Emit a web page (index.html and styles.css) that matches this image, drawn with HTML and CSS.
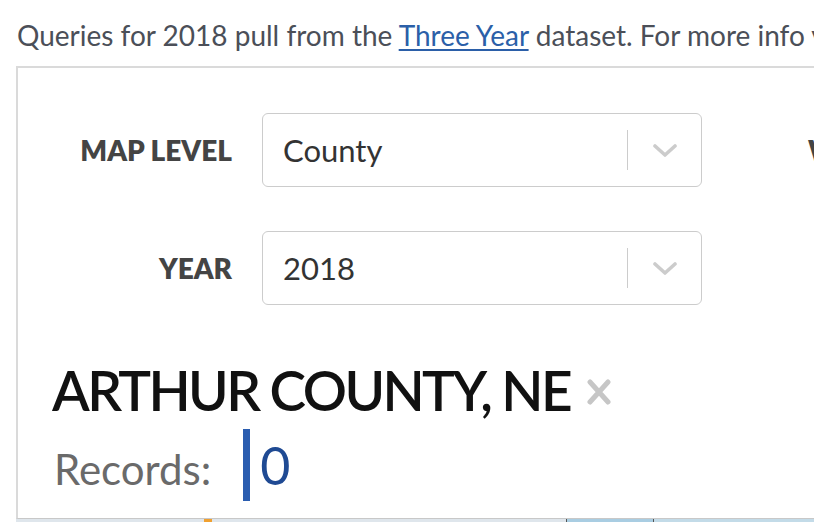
FILE: index.html
```html
<!DOCTYPE html>
<html lang="en">
<head>
<meta charset="utf-8">
<title>Query panel</title>
<link rel="stylesheet" href="styles.css">
</head>
<body>
<p class="intro">Queries for 2018 pull from the <a class="link" href="#">Three Year</a> dataset. For more info visit the documentation page.</p>
<div class="panel">
  <div class="form">
    <div class="row">
      <label class="label">MAP LEVEL</label>
      <div class="select">
        <span class="value">County</span>
        <span class="sep"></span>
        <span class="arrow"><svg width="24" height="14" viewBox="0 0 24 14"><path d="M2 2 L12 11 L22 2" fill="none" stroke="#cccccc" stroke-width="3.6" stroke-linecap="round" stroke-linejoin="round"/></svg></span>
      </div>
      <label class="label label-next">WEIGHTING</label>
    </div>
    <div class="row">
      <label class="label">YEAR</label>
      <div class="select">
        <span class="value">2018</span>
        <span class="sep"></span>
        <span class="arrow"><svg width="24" height="14" viewBox="0 0 24 14"><path d="M2 2 L12 11 L22 2" fill="none" stroke="#cccccc" stroke-width="3.6" stroke-linecap="round" stroke-linejoin="round"/></svg></span>
      </div>
    </div>
  </div>
  <div class="result">
    <div class="title-row">
      <h1 class="title">ARTHUR COUNTY, NE</h1>
      <span class="close"><svg width="24" height="26" viewBox="0 0 24 26"><path d="M3 3 L21 23 M21 3 L3 23" stroke="#c6c6c6" stroke-width="5" stroke-linecap="round"/></svg></span>
    </div>
    <div class="records">
      <span class="records-label">Records:</span>
      <span class="records-value">0</span>
    </div>
  </div>
</div>
<div class="map-strip"></div>
</body>
</html>
```
FILE: styles.css
```css
html, body {
  margin: 0;
  padding: 0;
  background: #ffffff;
  overflow: hidden;
}
body {
  width: 814px;
  height: 522px;
  font-family: Lato, "Open Sans", sans-serif;
}
.intro {
  margin: 0;
  padding: 20px 0 0 17px;
  font-size: 28px;
  line-height: 30px;
  color: #4b4f58;
  white-space: nowrap;
}
.link {
  color: #2b5fa8;
  text-decoration: underline;
  text-decoration-thickness: 2px;
  text-underline-offset: 3px;
}
.panel {
  margin: 16px 0 0 16px;
  border-left: 2px solid #dadada;
  border-top: 2px solid #dadada;
  border-bottom: 1px solid #c8c8c8;
  height: 450px;
  box-sizing: content-box;
  overflow: hidden;
  white-space: nowrap;
}
.form {
  padding-top: 45px;
  display: flex;
  flex-direction: column;
  gap: 44px;
}
.row {
  display: flex;
  align-items: center;
}
.label {
  width: 214px;
  text-align: right;
  font-weight: 800;
  font-size: 28px;
  color: #444444;
  flex: none;
}
.label-next {
  width: auto;
  text-align: left;
  margin-left: 106px;
}
.select {
  margin-left: 30px;
  width: 440px;
  height: 74px;
  box-sizing: border-box;
  border: 1px solid #cccccc;
  border-radius: 6px;
  display: flex;
  align-items: center;
  flex: none;
}
.value {
  flex: 1;
  padding-left: 20px;
  font-size: 31px;
  color: #333333;
}
.sep {
  width: 1px;
  height: 40px;
  background: #cccccc;
}
.arrow {
  width: 73px;
  display: flex;
  justify-content: center;
  align-items: center;
  padding-top: 2px;
}
.result {
  padding-left: 34px;
  margin-top: 50px;
}
.title-row {
  display: flex;
  align-items: center;
  gap: 17px;
}
.title {
  margin: 0;
  font-size: 55px;
  line-height: 70px;
  font-weight: 600;
  color: #111111;
  letter-spacing: -2.6px;
}
.close {
  display: flex;
  padding-top: 4px;
}
.records {
  margin-top: 4px;
  display: flex;
  align-items: baseline;
}
.records-label {
  font-size: 42px;
  color: #6a6a6a;
  margin-left: 2px;
}
.records-value {
  margin-left: 32px;
  border-left: 7px solid #2a5db0;
  padding-left: 10px;
  font-size: 52px;
  line-height: 72px;
  color: #1f4a93;
}
.map-strip {
  margin-left: 16px;
  height: 10px;
  background:
    linear-gradient(90deg, transparent 188px, #f0a030 188px, #f0a030 196px, transparent 196px),
    linear-gradient(90deg, #dfe6ec 0, #dfe6ec 550px, #555 550px, #555 551px, #a9cde2 551px, #a9cde2 637px, #555 637px, #555 638px, #c3dbe8 638px);
}
```
